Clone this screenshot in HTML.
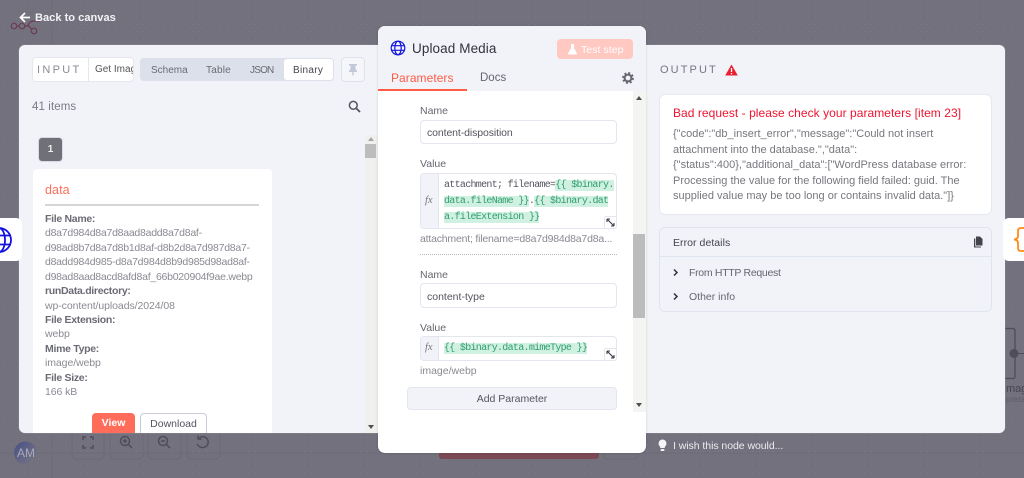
<!DOCTYPE html>
<html><head><meta charset="utf-8">
<style>
html,body{margin:0;padding:0}
body{width:1024px;height:478px;overflow:hidden;position:relative;background-color:#72717d;background-image:radial-gradient(circle,#7a7985 .6px,transparent .8px);background-size:7px 7px;font-family:"Liberation Sans",sans-serif;font-size:11px;color:#55555f}
.a,.t{position:absolute}
.t{white-space:nowrap;line-height:14px;margin-top:1px}
.m{font-family:"Liberation Mono",monospace;font-size:10px;letter-spacing:-.7px;line-height:16px;color:#55555f}
.g{background:#d0f1e1;color:#2f9e6e}
.b{font-weight:bold;color:#6b6b75;letter-spacing:-.3px}
.h{letter-spacing:-.25px}
.n{letter-spacing:-.08px}
.inp{position:absolute;background:#fff;border:1px solid #e3e6ef;border-radius:4px;box-sizing:border-box}
</style></head><body>

<!-- backdrop details -->
<svg class="a" style="left:0;top:0" width="1024" height="478">
<g fill="none" stroke="#6d3b52" stroke-width="1.200"><circle cx="14" cy="26" r="2.800"/><circle cx="22" cy="26" r="2.800"/><circle cx="34" cy="31" r="2.800"/><path d="M17 26h2M25 26h3q2 0 3 3M28 26q1-5 6-5h6"/></g>
<path d="M52 0V45" stroke="#6d6c78" stroke-width="1"/>
<path d="M52 433V478M0 453H1024" stroke="#6d6c78" stroke-width="1"/>
<g fill="none" stroke="#6a6974" stroke-width="1"><rect x="72" y="425" width="32" height="34" rx="4"/><rect x="110" y="425" width="33" height="34" rx="4"/><rect x="148" y="425" width="33" height="34" rx="4"/><rect x="187" y="425" width="33" height="34" rx="4"/></g>
<g fill="none" stroke="#4e4d59" stroke-width="1.500">
<path d="M83 440v-3h3M90 437h3v3M93 445v3h-3M86 448h-3v-3"/>
<circle cx="125" cy="441" r="4.500"/><path d="M128.500 444.500l3.500 3.500M123 441h4M125 439v4"/>
<circle cx="163" cy="441" r="4.500"/><path d="M166.500 444.500l3.500 3.500M161 441h4"/>
<path d="M199 438a5.500 5.500 0 1 1-1.500 6M198 435.500v3.500h3.500"/>
</g>
<rect x="439" y="446" width="160" height="13" rx="3" fill="#7a4a55"/>
<rect x="604" y="446" width="33" height="13" rx="3" fill="none" stroke="#6a6974"/>
<defs><linearGradient id="av" x1="0" y1="0" x2="1" y2="1"><stop offset="0" stop-color="#474f85"/><stop offset="1" stop-color="#7c7a82"/></linearGradient></defs>
<circle cx="25.500" cy="453" r="11.500" fill="url(#av)"/>
<path d="M1005 328.500h8a2 2 0 0 1 2 2v46a2 2 0 0 1-2 2h-8" fill="none" stroke="#4e4d59" stroke-width="1.300"/>
<circle cx="1014" cy="353.500" r="4.500" fill="#4e4d59"/>
<path d="M1018 353.500h6" stroke="#4e4d59"/>
</svg>
<span class="t" style="left:17px;top:445px;font-size:12px;color:#a9a9b8">AM</span>
<span class="t" style="left:1006px;top:381px;font-size:11px;color:#45444f">mage</span>
<span class="t" style="left:1006px;top:392px;font-size:8px;color:#5d5c68">press.</span>

<!-- back -->
<svg class="a" style="left:19px;top:12px" width="12" height="11"><path d="M11 5.500H2M6 1L1.500 5.500 6 10" fill="none" stroke="#fff" stroke-width="1.700"/></svg>
<span class="t" style="left:35px;top:10px;font-size:11.100px;font-weight:bold;color:#f3f3f6">Back to canvas</span>

<!-- main panel -->
<div class="a" style="left:19px;top:45px;width:986px;height:388px;background:#f1f3f8;border-radius:6px;overflow:hidden;box-shadow:0 0 1px #bbb"></div>

<!-- side tabs -->
<div class="a" style="left:0;top:218px;width:22px;height:43px;background:#fff;border-radius:0 6px 6px 0"></div>
<svg class="a" style="left:0;top:226px" width="14" height="28"><g fill="none" stroke="#1212e0" stroke-width="1.800"><circle cx="-1" cy="14" r="12"/><ellipse cx="-1" cy="14" rx="6" ry="12"/><path d="M-13 9.500h24M-13 18.500h24"/></g></svg>
<div class="a" style="left:1003px;top:218px;width:21px;height:43px;background:#fff;border-radius:6px 0 0 6px"></div>
<svg class="a" style="left:1010px;top:226px" width="14" height="27"><path d="M14 2h-3q-3 0-3 3v5q0 3-4 3.500q4 .5 4 3.500v5q0 3 3 3h3" fill="none" stroke="#ff8a14" stroke-width="1.800"/></svg>

<!-- INPUT header -->
<div class="a" style="left:32px;top:57px;width:102px;height:25px;background:#fff;border:1px solid #e4e7f0;border-radius:4px;box-sizing:border-box;overflow:hidden">
<span class="t" style="left:4px;top:4px;font-size:11px;letter-spacing:2.300px;color:#8a8a93">INPUT</span>
<div class="a" style="left:55px;top:0;width:1px;height:24px;background:#e4e7f0"></div>
<span class="t" style="left:62px;top:4px;font-size:10px;color:#555">Get Image</span>
</div>
<div class="a" style="left:140px;top:58px;width:194px;height:23px;background:#dce0ea;border-radius:4px"></div>
<div class="a" style="left:284px;top:59px;width:49px;height:21px;background:#fff;border-radius:3px"></div>
<span class="t" style="left:151px;top:63px;font-size:10px;color:#6a6a74">Schema</span>
<span class="t" style="left:206px;top:63px;font-size:10px;letter-spacing:.2px;color:#6a6a74">Table</span>
<span class="t" style="left:250px;top:63px;font-size:10px;letter-spacing:-.8px;color:#6a6a74">JSON</span>
<span class="t" style="left:293px;top:63px;font-size:10px;letter-spacing:.3px;color:#44444e">Binary</span>
<div class="a" style="left:341px;top:57px;width:24px;height:25px;background:#f5f6fa;border:1px solid #dfe2ec;border-radius:4px;box-sizing:border-box"></div>
<svg class="a" style="left:347px;top:63px" width="12" height="13"><path d="M2 1h8v1.500H8.500V6L10 8v1H6.700v3.500h-1.400V9H2V8l1.500-2V2.500H2z" fill="#c3c8d6"/></svg>

<span class="t" style="left:32px;top:99px;font-size:11.500px;letter-spacing:.1px;color:#7a7a84">41 items</span>
<svg class="a" style="left:348px;top:100px" width="13" height="13"><circle cx="5.300" cy="5.300" r="3.900" fill="none" stroke="#55555f" stroke-width="1.500"/><path d="M8.200 8.200l3.800 3.800" stroke="#55555f" stroke-width="1.800"/></svg>

<div class="a" style="left:38px;top:137px;width:25px;height:25px;background:#707078;border:1px solid #d8dbe5;border-radius:4px;box-sizing:border-box"></div>
<span class="t" style="left:38px;top:142px;width:25px;text-align:center;font-size:10px;font-weight:bold;color:#f0f0f2">1</span>

<!-- scrollbar left -->
<div class="a" style="left:365px;top:135px;width:13px;height:298px;background:#f0f0ee"></div>
<div class="a" style="left:365px;top:144px;width:11px;height:14px;background:#bdbdbd"></div>
<svg class="a" style="left:367px;top:136px" width="8" height="6"><path d="M1 5l3-4 3 4z" fill="#a8a8a8"/></svg>
<svg class="a" style="left:367px;top:424px" width="8" height="6"><path d="M1 1l3 4 3-4z" fill="#505050"/></svg>

<!-- data card -->
<div class="a" style="left:33px;top:169px;width:239px;height:264px;background:#fff;border-radius:4px 4px 0 0"></div>
<span class="t" style="left:45px;top:182px;font-size:12.500px;letter-spacing:.1px;color:#ff6d5a">data</span>
<div class="a" style="left:45px;top:204px;width:214px;height:2px;background:#d6d6d8"></div>
<div style="position:absolute;left:45px;top:212px;font-size:10.500px;line-height:14.420px;white-space:nowrap;color:#8a8a93">
<div class="b">File Name:</div>
<div class="h">d8a7d984d8a7d8aad8add8a7d8af-</div>
<div class="h">d98ad8b7d8a7d8b1d8af-d8b2d8a7d987d8a7-</div>
<div class="h">d8add984d985-d8a7d984d8b9d985d98ad8af-</div>
<div class="h">d98ad8aad8acd8afd8af_66b020904f9ae.webp</div>
<div class="b">runData.directory:</div>
<div class="n">wp-content/uploads/2024/08</div>
<div class="b">File Extension:</div>
<div class="n">webp</div>
<div class="b">Mime Type:</div>
<div class="n">image/webp</div>
<div class="b">File Size:</div>
<div class="n">166 kB</div>
</div>
<div class="a" style="left:92px;top:413px;width:43px;height:20px;background:#ff6d5a;border-radius:4px 4px 0 0;color:#fff;font-size:10.500px;font-weight:bold;text-align:center;line-height:21px">View</div>
<div class="a" style="left:140px;top:413px;width:67px;height:20px;background:#fff;border:1px solid #c9ccd6;border-bottom:0;border-radius:4px 4px 0 0;box-sizing:border-box;color:#55555f;font-size:10.500px;text-align:center;line-height:20px">Download</div>

<!-- OUTPUT -->
<span class="t" style="left:660px;top:62px;font-size:11px;letter-spacing:2.100px;color:#77777f">OUTPUT</span>
<svg class="a" style="left:725px;top:64px" width="13" height="12"><path d="M6.500 .5L12.800 11.500H.2z" fill="#ea1f30"/><path d="M6.500 4v4M6.500 9v1.300" stroke="#fff" stroke-width="1.300"/></svg>
<div class="a" style="left:659px;top:94px;width:333px;height:121px;background:#fff;border:1px solid #e5e8f0;border-radius:6px;box-sizing:border-box"></div>
<span class="t" style="left:673px;top:105px;font-size:12px;letter-spacing:.05px;color:#f0142f">Bad request - please check your parameters [item 23]</span>
<div style="position:absolute;left:673px;top:127px;font-size:11px;line-height:15.600px;white-space:nowrap;color:#77777f">
<div>{"code":"db_insert_error","message":"Could not insert</div>
<div>attachment into the database.","data":</div>
<div>{"status":400},"additional_data":["WordPress database error:</div>
<div>Processing the value for the following field failed: guid. The</div>
<div>supplied value may be too long or contains invalid data."]}</div>
</div>
<div class="a" style="left:659px;top:227px;width:333px;height:85px;border:1px solid #e0e4ee;border-radius:6px;box-sizing:border-box"></div>
<div class="a" style="left:660px;top:256px;width:331px;height:1px;background:#dfe6f0"></div>
<span class="t" style="left:673px;top:235px;font-size:10.500px;letter-spacing:.05px;color:#44444e">Error details</span>
<svg class="a" style="left:973px;top:236px" width="11" height="12"><path d="M3 .5h4l2.500 2.500v6.500H3z" fill="#44444e"/><path d="M1 2.500h1.300v8H8v1H1z" fill="#44444e"/></svg>
<svg class="a" style="left:672px;top:268px" width="8" height="9"><path d="M2 1.500l3 3-3 3" fill="none" stroke="#33333d" stroke-width="1.500"/></svg>
<span class="t" style="left:689px;top:265px;font-size:10.500px;letter-spacing:-.3px;color:#66666f">From HTTP Request</span>
<svg class="a" style="left:672px;top:292px" width="8" height="9"><path d="M2 1.500l3 3-3 3" fill="none" stroke="#33333d" stroke-width="1.500"/></svg>
<span class="t" style="left:689px;top:289px;font-size:10.500px;color:#66666f">Other info</span>

<svg class="a" style="left:657px;top:439px" width="11" height="13"><path d="M5.500 .5a4 4 0 0 1 2.300 7.200V9H3.200V7.700A4 4 0 0 1 5.500 .5z" fill="#f5f5f7"/><rect x="3.500" y="10" width="4" height="2" rx="1" fill="#f5f5f7"/></svg>
<span class="t" style="left:673px;top:438px;font-size:10.500px;letter-spacing:-.05px;color:#ececf0">I wish this node would...</span>

<!-- center panel -->
<div class="a" style="left:378px;top:26px;width:268px;height:427px;background:#fff;border-radius:7px;overflow:hidden;box-shadow:0 0 3px rgba(0,0,0,.12)">
<div class="a" style="left:0;top:0;width:268px;height:65px;background:#f1f3f8"></div>
<div class="a" style="left:0;top:63px;width:89px;height:2px;background:#ff5c45"></div>
</div>
<svg class="a" style="left:390px;top:40px" width="16" height="16"><g fill="none" stroke="#1212e0" stroke-width="1.200"><circle cx="8" cy="8" r="6.800"/><ellipse cx="8" cy="8" rx="3.200" ry="6.800"/><path d="M1.500 5.700h13M1.500 10.300h13"/></g></svg>
<span class="t" style="left:412px;top:41px;font-size:13.500px;letter-spacing:.1px;color:#33333d">Upload Media</span>
<div class="a" style="left:557px;top:39px;width:76px;height:20px;background:#ffc8c0;border-radius:4px"></div>
<svg class="a" style="left:567px;top:43px" width="11" height="12"><path d="M4 1h3v4l3 5.500a.7.700 0 0 1-.6 1H1.600a.7.700 0 0 1-.6-1L4 5z" fill="#fff"/></svg>
<span class="t" style="left:581px;top:42px;font-size:10.500px;letter-spacing:.05px;color:#fff">Test step</span>
<span class="t" style="left:391px;top:70px;font-size:12px;letter-spacing:.05px;color:#ff5c45">Parameters</span>
<span class="t" style="left:480px;top:70px;font-size:11.500px;color:#66666f">Docs</span>
<svg class="a" style="left:622px;top:72px" width="12" height="12"><circle cx="6" cy="6" r="3.400" fill="none" stroke="#66666f" stroke-width="2"/><circle cx="6" cy="6" r="4.900" fill="none" stroke="#66666f" stroke-width="2" stroke-dasharray="2 1.850"/></svg>

<!-- center scrollbar -->
<div class="a" style="left:633px;top:91px;width:13px;height:321px;background:#f4f4f2"></div>
<div class="a" style="left:633px;top:234px;width:12px;height:84px;background:#bcbcbc"></div>
<svg class="a" style="left:635px;top:95px" width="8" height="6"><path d="M1 5l3-4 3 4z" fill="#505050"/></svg>
<svg class="a" style="left:635px;top:402px" width="8" height="6"><path d="M1 1l3 4 3-4z" fill="#505050"/></svg>

<span class="t" style="left:420px;top:103px;font-size:10.500px;color:#66666f">Name</span>
<div class="inp" style="left:420px;top:120px;width:197px;height:24px"></div>
<span class="t" style="left:427px;top:125px;font-size:10.500px;letter-spacing:-.1px;color:#55555f">content-disposition</span>
<span class="t" style="left:420px;top:156px;font-size:10.500px;color:#66666f">Value</span>
<div class="inp" style="left:420px;top:173px;width:197px;height:56px"></div>
<div class="a" style="left:421px;top:174px;width:17px;height:54px;background:#f1f3f8;border-right:1px solid #e3e6ef;border-radius:3px 0 0 3px"></div>
<span class="t" style="left:425px;top:193px;font-family:'Liberation Serif',serif;font-style:italic;font-size:10.500px;color:#77777f">fx</span>
<div class="t m" style="left:444px;top:177px"><div>attachment; filename=<span class="g">{{ $binary.</span></div><div><span class="g">data.fileName }}</span>.<span class="g">{{ $binary.dat</span></div><div><span class="g">a.fileExtension }}</span></div></div>
<div class="a" style="left:604px;top:216px;width:13px;height:13px;background:#fff;border:1px solid #e3e6ef;border-radius:2px 0 3px 0;box-sizing:border-box"></div>
<svg class="a" style="left:606px;top:218px" width="9" height="9"><path d="M1.500 1.500l6 6M1 1v3M1 1h3M8 8h-3M8 8v-3" fill="none" stroke="#3a3a44" stroke-width="1.100"/></svg>
<span class="t" style="left:420px;top:231px;font-size:10.500px;letter-spacing:-.2px;color:#8a8a93">attachment; filename=d8a7d984d8a7d8a...</span>
<div class="a" style="left:420px;top:254px;width:197px;border-top:1px dotted #b8b8be"></div>

<span class="t" style="left:420px;top:267px;font-size:10.500px;color:#66666f">Name</span>
<div class="inp" style="left:420px;top:283px;width:197px;height:25px"></div>
<span class="t" style="left:427px;top:289px;font-size:10.500px;color:#55555f">content-type</span>
<span class="t" style="left:420px;top:320px;font-size:10.500px;color:#66666f">Value</span>
<div class="inp" style="left:420px;top:336px;width:197px;height:25px"></div>
<div class="a" style="left:421px;top:337px;width:17px;height:23px;background:#f1f3f8;border-right:1px solid #e3e6ef;border-radius:3px 0 0 3px"></div>
<span class="t" style="left:425px;top:340px;font-family:'Liberation Serif',serif;font-style:italic;font-size:10.500px;color:#77777f">fx</span>
<div class="t m" style="left:444px;top:340px"><span class="g">{{ $binary.data.mimeType }}</span></div>
<div class="a" style="left:604px;top:348px;width:13px;height:13px;background:#fff;border:1px solid #e3e6ef;border-radius:2px 0 3px 0;box-sizing:border-box"></div>
<svg class="a" style="left:606px;top:350px" width="9" height="9"><path d="M1.500 1.500l6 6M1 1v3M1 1h3M8 8h-3M8 8v-3" fill="none" stroke="#3a3a44" stroke-width="1.100"/></svg>
<span class="t" style="left:420px;top:363px;font-size:10.500px;color:#8a8a93">image/webp</span>
<div class="a" style="left:407px;top:387px;width:210px;height:23px;background:#f1f3f8;border:1px solid #e3e6ef;border-radius:4px;box-sizing:border-box;text-align:center;line-height:22px;font-size:10.500px;color:#55555f">Add Parameter</div>

</body></html>
